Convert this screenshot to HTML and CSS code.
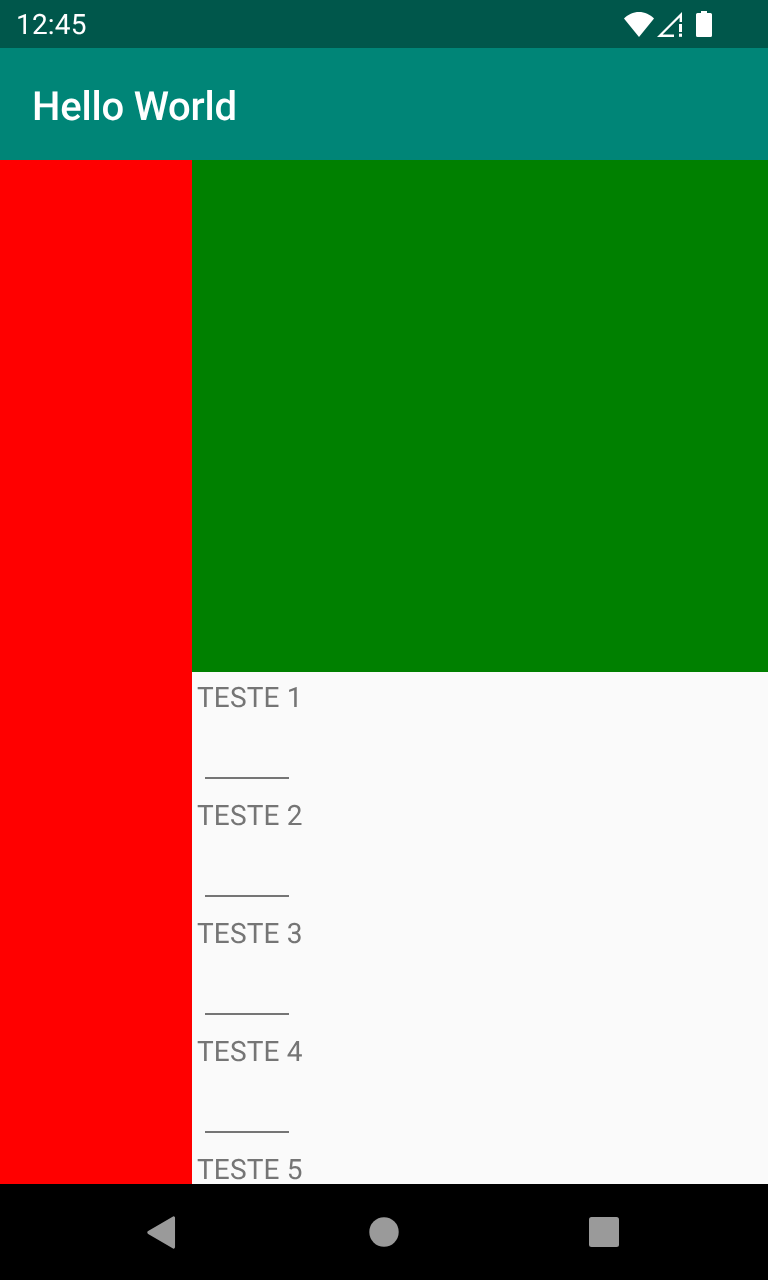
FILE: index.html
```html
<!DOCTYPE html>
<html lang="en">
<head>
    <meta charset="UTF-8">
    <meta name="viewport" content="width=device-width, initial-scale=1.0">
    <title>Hello World</title>
    <link rel="stylesheet" href="styles.css">
</head>
<body>
    <div class="phone">
        <div class="status-bar">
            <span class="clock">12:45</span>
            <div class="status-icons">
                <svg class="icon-wifi" width="30" height="25" viewBox="0 0 30 25"><path d="M0 6.5C4 2.5 9.2 0 15 0S26 2.5 30 6.5L15 25Z" fill="#fff"/></svg>
                <svg class="icon-signal" width="25" height="25" viewBox="0 0 25 25"><path d="M25 0V10H22.6V5.4L5.6 22.4H17V25H0Z" fill="#fff"/><rect x="22" y="12" width="3" height="8" fill="#fff"/><rect x="22" y="21.6" width="3" height="3.2" fill="#fff"/></svg>
                <svg class="icon-battery" width="16" height="26" viewBox="0 0 16 26"><path d="M5 0H11V2H14.5A1.5 1.5 0 0 1 16 3.5V24.5A1.5 1.5 0 0 1 14.5 26H1.5A1.5 1.5 0 0 1 0 24.5V3.5A1.5 1.5 0 0 1 1.5 2H5Z" fill="#fff"/></svg>
            </div>
        </div>
        <div class="app-bar">
            <h1>Hello World</h1>
        </div>
        <div class="content">
            <div class="side"></div>
            <div class="main">
                <div class="panel"></div>
                <div class="list">
                    <div class="row"><p>TESTE 1</p><div class="rule"></div></div>
                    <div class="row"><p>TESTE 2</p><div class="rule"></div></div>
                    <div class="row"><p>TESTE 3</p><div class="rule"></div></div>
                    <div class="row"><p>TESTE 4</p><div class="rule"></div></div>
                    <div class="row"><p>TESTE 5</p></div>
                </div>
            </div>
        </div>
        <div class="nav-bar">
            <svg class="nav-back" width="29" height="33" viewBox="0 0 30 34"><path d="M1.2 15.5L26.5 0.6A1.6 1.6 0 0 1 29 2V32A1.6 1.6 0 0 1 26.5 33.4L1.2 18.5A1.7 1.7 0 0 1 1.2 15.5Z" fill="#9a9a9a"/></svg>
            <svg width="30" height="30" viewBox="0 0 30 30"><circle cx="15" cy="15" r="14.7" fill="#9a9a9a"/></svg>
            <svg width="30" height="30" viewBox="0 0 30 30"><rect width="30" height="30" rx="2.5" fill="#9a9a9a"/></svg>
        </div>
    </div>
</body>
</html>
```

FILE: styles.css
```css
body {
    margin: 0;
    font-family: Roboto, sans-serif;
    text-rendering: geometricPrecision;
}
.phone {
    width: 768px;
    height: 1280px;
    display: flex;
    flex-direction: column;
    overflow: hidden;
}
.status-bar {
    height: 48px;
    flex: none;
    background: #00574b;
    color: #fff;
    display: flex;
    align-items: center;
    justify-content: space-between;
    padding: 0 56px 0 16px;
}
.clock {
    font-size: 28px;
    letter-spacing: 0.2px;
    filter: grayscale(1);
}
.status-icons {
    display: flex;
    align-items: center;
}
.icon-signal {
    margin: 1px 14px 0 3px;
}
.app-bar {
    height: 112px;
    flex: none;
    background: #008577;
    display: flex;
    align-items: center;
    padding: 4px 0 0 32px;
    box-sizing: border-box;
}
h1 {
    margin: 0;
    font-size: 40px;
    font-weight: 500;
    letter-spacing: -0.2px;
    color: #fff;
    filter: grayscale(1);
}
.content {
    flex: 1;
    display: flex;
    min-height: 0;
}
.side {
    width: 192px;
    background: #f00;
}
.main {
    flex: 1;
    display: flex;
    flex-direction: column;
    min-height: 0;
}
.panel {
    height: 512px;
    flex: none;
    background: #008000;
}
.list {
    flex: 1;
    background: #fafafa;
    padding-left: 5px;
}
.row {
    height: 118px;
    padding-top: 12px;
    box-sizing: border-box;
}
.row:last-child {
    height: auto;
}
.row p {
    margin: 0;
    font-size: 28px;
    line-height: 28px;
    letter-spacing: 0.15px;
    color: #757575;
    filter: grayscale(1);
}
.rule {
    width: 84px;
    height: 2px;
    margin: 65px 0 0 8px;
    background: #757575;
}
.nav-bar {
    height: 96px;
    flex: none;
    background: #000;
    display: flex;
    align-items: center;
    gap: 190px;
    padding-left: 147px;
}
.nav-back {
    margin-right: 3px;
}
```
